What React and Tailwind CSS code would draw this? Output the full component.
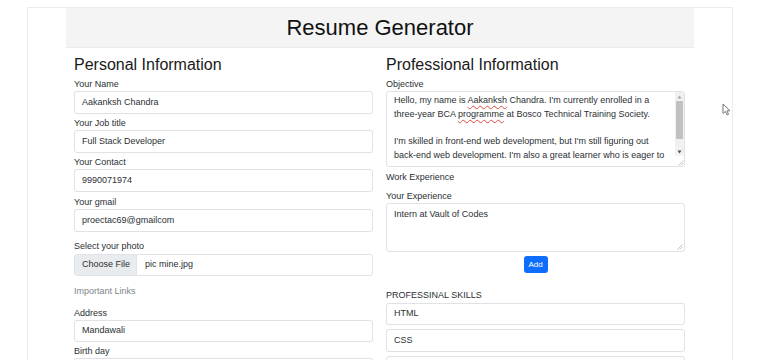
import React from 'react';

const labelCls = 'block h-[13px] text-[9px] leading-[13px] text-[#2b2f33]';
const inputCls =
  'flex items-center w-full border border-[#dfe2e6] rounded-[3px] bg-white pl-[7px] text-[9px] text-[#2b2f33] shadow-[0_0_1px_rgba(0,0,0,0.04)]';

function Field({ label, value, mt = 'mt-[3px]', h = 'h-[23px]' }) {
  return (
    <div className={mt}>
      <label className={labelCls}>{label}</label>
      <div className={`${inputCls} ${h}`}>{value}</div>
    </div>
  );
}

function Grip() {
  return (
    <svg width="7" height="7" viewBox="0 0 7 7" className="text-[#b5b5b5]">
      <path d="M6.5 1.5L1.5 6.5M6.5 4L4 6.5" stroke="currentColor" strokeWidth="0.8" />
    </svg>
  );
}

function Scrollbar() {
  return (
    <div className="flex flex-col w-[9px] bg-[#f1f1f1]">
      <div className="h-[9px] flex items-center justify-center">
        <svg width="5" height="4" viewBox="0 0 5 4">
          <path d="M2.5 0.5L4.5 3.5H0.5Z" fill="#a3a3a3" />
        </svg>
      </div>
      <div className="mx-[1px] h-[38px] bg-[#c1c1c1]" />
      <div className="h-[8px]" />
      <div className="h-[9px] flex items-center justify-center">
        <svg width="5" height="4" viewBox="0 0 5 4">
          <path d="M0.5 0.5H4.5L2.5 3.5Z" fill="#505050" />
        </svg>
      </div>
      <div className="flex-1 flex items-end justify-end bg-white">
        <Grip />
      </div>
    </div>
  );
}

function Spell({ children }) {
  return (
    <span className="underline decoration-wavy decoration-[#e0483e] decoration-[0.8px] underline-offset-[2px]">
      {children}
    </span>
  );
}

export default function App() {
  return (
    <div className="relative min-h-screen bg-white font-['Liberation_Sans',Arial,sans-serif] text-[#212529] overflow-hidden">
      <div className="pt-[7px] pl-[27px]">
        <div className="w-[706px] h-[420px] border border-[#ececec]">
          <div className="ml-[38px] w-[628px]">
            {/* Header */}
            <div className="h-[40px] bg-[#f4f4f4] border-b border-[#ebebeb] flex items-center justify-center">
              <h1 className="text-[22px] leading-[24px] text-[#111]">Resume Generator</h1>
            </div>

            <div className="flex gap-[13px] px-[8px]">
              {/* Personal */}
              <div className="w-[299px]">
                <h2 className="mt-[8px] h-[18px] text-[16px] leading-[18px] text-[#1a1a1a]">Personal Information</h2>
                <Field label="Your Name" value="Aakanksh Chandra" mt="mt-[4px]" />
                <Field label="Your Job title" value="Full Stack Developer" />
                <Field label="Your Contact" value="9990071974" />
                <Field label="Your gmail" value="proectac69@gmailcom" mt="mt-[4px]" />

                <label className={`${labelCls} mt-[8px]`}>Select your photo</label>
                <div className="mt-[1px] flex h-[22px] w-full border border-[#dfe2e6] rounded-[3px] overflow-hidden text-[9px] text-[#2b2f33]">
                  <div className="w-[62px] bg-[#e9ecef] border-r border-[#dfe2e6] flex items-center pl-[7px]">
                    Choose File
                  </div>
                  <div className="flex items-center pl-[8px]">pic mine.jpg</div>
                </div>

                <div className="mt-[9px] h-[13px] text-[9px] leading-[13px] text-[#7d858c]">Important Links</div>

                <Field label="Address" value="Mandawali" mt="mt-[9px]" h="h-[22px]" />
                <Field label="Birth day" value="" mt="mt-[3px]" />
              </div>

              {/* Professional */}
              <div className="w-[299px]">
                <h2 className="mt-[8px] h-[18px] text-[16px] leading-[18px] text-[#1a1a1a]">Professional Information</h2>
                <label className={`${labelCls} mt-[4px]`}>Objective</label>
                <div className="flex h-[76px] border border-[#dfe2e6] rounded-[3px] overflow-hidden">
                  <div className="flex-1 h-full pl-[7px] pt-[2px] text-[9px] leading-[13.75px] text-[#2b2f33] whitespace-nowrap overflow-hidden">
                    <div>
                      Hello, my name is <Spell>Aakanksh</Spell> Chandra. I'm currently enrolled in a
                    </div>
                    <div>
                      three-year BCA <Spell>programme</Spell> at Bosco Technical Training Society.
                    </div>
                    <div>&nbsp;</div>
                    <div>I'm skilled in front-end web development, but I'm still figuring out</div>
                    <div>back-end web development. I'm also a great learner who is eager to</div>
                  </div>
                  <Scrollbar />
                </div>

                <div className="mt-[4px] h-[13px] text-[9px] leading-[13px] text-[#2b2f33]">Work Experience</div>
                <label className={`${labelCls} mt-[6px]`}>Your Experience</label>
                <div className="flex h-[49px] border border-[#dfe2e6] rounded-[3px]">
                  <div className="flex-1 pl-[7px] pt-[3px] text-[9px] leading-[14px] text-[#2b2f33]">
                    Intern at Vault of Codes
                  </div>
                  <div className="flex items-end pr-[1px] pb-[1px]">
                    <Grip />
                  </div>
                </div>

                <div className="mt-[4px] flex justify-center">
                  <button className="w-[24px] h-[17px] rounded-[3px] bg-[#0d6efd] text-white text-[8px] leading-[17px]">
                    Add
                  </button>
                </div>

                <div className="mt-[16px] h-[13px] text-[9px] leading-[13px] text-[#2b2f33]">PROFESSINAL SKILLS</div>
                <div className={`${inputCls} h-[22px] mt-[1px]`}>HTML</div>
                <div className={`${inputCls} h-[23px] mt-[4px]`}>CSS</div>
                <div className={`${inputCls} h-[23px] mt-[4px]`} />
              </div>
            </div>
          </div>
        </div>
      </div>

      {/* mouse pointer */}
      <svg className="absolute left-[722px] top-[103px]" width="9" height="13" viewBox="0 0 9 13">
        <path d="M1 1V10.5L3.3 8.4L5 12L6.5 11.3L4.9 7.8H8Z" fill="#fff" stroke="#6b6b6b" strokeWidth="0.9" strokeLinejoin="round" />
      </svg>
    </div>
  );
}
